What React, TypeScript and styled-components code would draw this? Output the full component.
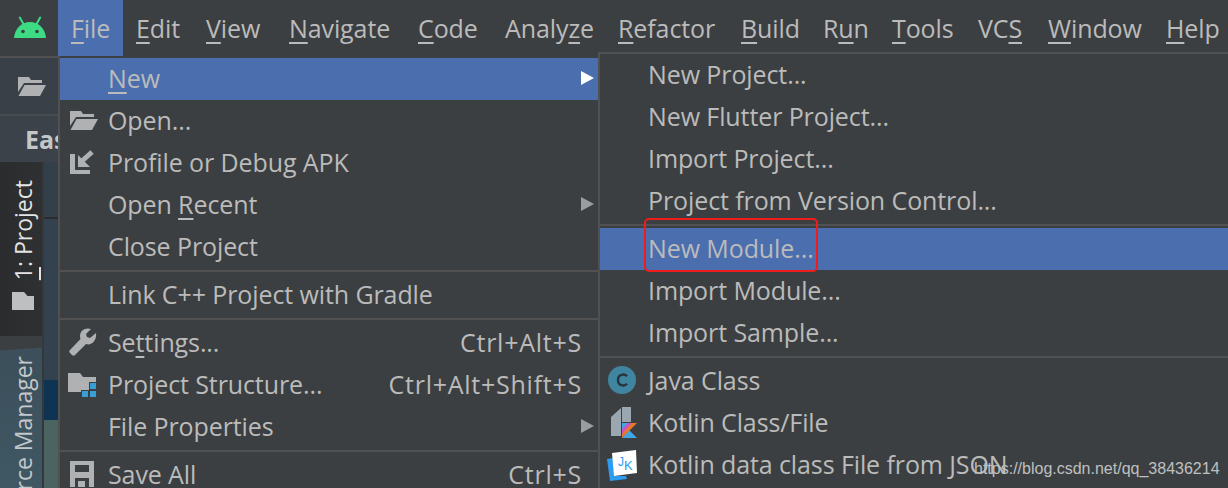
import React from 'react';
import styled, { createGlobalStyle } from 'styled-components';

const GlobalStyle = createGlobalStyle`
  html, body {
    margin: 0;
    padding: 0;
    overflow: hidden;
    background: #3c3f41;
  }
`;

const FONT = `"Open Sans", "Noto Sans", sans-serif`;

const M: React.FC<{ children: React.ReactNode }> = ({ children }) => <Mnemonic>{children}</Mnemonic>;

const AndroidLogo = () => (
  <svg width="34" height="24" viewBox="0 0 34 24">
    <path d="M10.5 9 L6.8 2.5 M23.5 9 L27.2 2.5" stroke="#3ddc84" strokeWidth="2" strokeLinecap="round" />
    <path d="M1 23 C1.8 13.5 8.5 7 17 7 C25.5 7 32.2 13.5 33 23 Z" fill="#3ddc84" />
    <circle cx="10" cy="16.5" r="1.8" fill="#3c3f41" />
    <circle cx="24" cy="16.5" r="1.8" fill="#3c3f41" />
  </svg>
);

const OpenFolder = () => (
  <svg width="28" height="21" viewBox="0 0 28 21">
    <path d="M0 1 H11 L13 4 H24 V7 H6 L0 16 Z" fill="#afb1b3" />
    <path d="M6.5 9 H28 L22 20 H0.5 Z" fill="#afb1b3" />
  </svg>
);

const DebugApk = () => (
  <svg width="28" height="28" viewBox="0 0 28 28">
    <path d="M0 6 H5 V22 H20 V26 H0 Z" fill="#afb1b3" />
    <path d="M8 7 V19 H20 Z" fill="#afb1b3" />
    <path d="M12 13 L22 4" stroke="#afb1b3" strokeWidth="5" />
  </svg>
);

const Wrench = () => (
  <svg width="28" height="28" viewBox="0 0 28 28">
    <path
      d="M27 5 L21 10 L18 9 L17 6 L22 1 C17 -1 11 2 11 8 C11 9 11 10 11.5 11 L1 22 C0 23 0 24 1 25 L3 27 C4 28 5 28 6 27 L17 16 C23 18 28 12 27 5 Z"
      fill="#afb1b3"
    />
  </svg>
);

const StructureIcon = () => (
  <svg width="28" height="25" viewBox="0 0 28 25">
    <path d="M0 1 H12 L15 5 H28 V10 H21 V18 H13 V20 H0 Z" fill="#afb1b3" />
    <rect x="22" y="11" width="6" height="6" fill="#389fd6" />
    <rect x="14" y="19" width="6" height="6" fill="#389fd6" />
    <rect x="22" y="19" width="6" height="6" fill="#389fd6" />
  </svg>
);

const SaveIcon = () => (
  <svg width="24" height="26" viewBox="0 0 24 26">
    <path fillRule="evenodd" d="M0 0 H24 V26 H0 Z M5 4 V11 H19 V4 Z M5 17 V26 H19 V17 Z" fill="#afb1b3" />
    <rect x="8" y="20" width="7" height="6" fill="#afb1b3" />
  </svg>
);

const JavaClassIcon = () => (
  <svg width="28" height="28" viewBox="0 0 28 28">
    <circle cx="14" cy="14" r="14" fill="#40859f" />
    <path d="M19 10.2 C17.8 8.8 16.2 8.4 14.5 8.6 C11.5 9 10 11.2 10 14 C10 16.8 11.5 19 14.5 19.4 C16.2 19.6 17.8 19.2 19 17.8" fill="none" stroke="#26353d" strokeWidth="2.4" />
  </svg>
);

const KotlinFileIcon = () => (
  <svg width="26" height="31" viewBox="0 0 26 31">
    <path d="M0 10 L10 1 V29 H0 Z" fill="#9aa7b0" />
    <path d="M11 0 H20 V15 H11 Z" fill="#9aa7b0" />
    <path d="M11 31 H26 L18 23 Z" fill="#40a6e8" />
    <path d="M11 16 V31 L26 16 Z" fill="#e8792b" />
    <path d="M11 16 H18 L11 23 Z" fill="#40a6e8" />
    <path d="M11 22 L17 16 H21 L11 27 Z" fill="#c757bc" />
  </svg>
);

const JsonKotlinIcon = () => (
  <svg width="33" height="33" viewBox="0 0 33 33">
    <path d="M1 11 L7 10 L10 28 H20 L21 31 L4 33 Z" fill="#2d9bf0" />
    <path d="M6 5 L30 2 L31 25 L8 28 Z" fill="#ffffff" />
    <text x="12" y="18" fontFamily="Liberation Sans, sans-serif" fontSize="12" fill="#2d9bf0">J</text>
    <text x="18" y="22" fontFamily="Liberation Sans, sans-serif" fontSize="13" fill="#2d9bf0">K</text>
  </svg>
);

export default function App() {
  return (
    <>
      <GlobalStyle />
      <Page>
        <MenuBar>
          <LogoSlot>
            <AndroidLogo />
          </LogoSlot>
          <TopItem $active $w={65}><M>F</M>ile</TopItem>
          <TopItem $w={70}><M>E</M>dit</TopItem>
          <TopItem $w={83}><M>V</M>iew</TopItem>
          <TopItem $w={129}><M>N</M>avigate</TopItem>
          <TopItem $w={87}><M>C</M>ode</TopItem>
          <TopItem $w={113}>Analy<M>z</M>e</TopItem>
          <TopItem $w={123}><M>R</M>efactor</TopItem>
          <TopItem $w={82}><M>B</M>uild</TopItem>
          <TopItem $w={69}>R<M>u</M>n</TopItem>
          <TopItem $w={86}><M>T</M>ools</TopItem>
          <TopItem $w={70}>VC<M>S</M></TopItem>
          <TopItem $w={118}><M>W</M>indow</TopItem>
          <TopItem $w={75}><M>H</M>elp</TopItem>
        </MenuBar>

        <Workspace>
          <Toolbar>
            <OpenFolder />
          </Toolbar>
          <TabRow>Eas</TabRow>
          <Body>
            <SideStrip>
              <ProjectTab>
                <SideFolder />
                <SideLabel $bright><M>1</M>: Project</SideLabel>
              </ProjectTab>
              <ResourceTab>
                <SideLabel>Resource Manager</SideLabel>
              </ResourceTab>
            </SideStrip>
            <Editor>
              <EditorDark />
              <EditorLine />
              <EditorBlue />
              <EditorNavy />
              <EditorGreen />
            </Editor>
          </Body>
        </Workspace>

        <FileMenu>
          <Row $selected>
            <IconSlot />
            <Label><M>N</M>ew</Label>
            <Arrow $bright />
          </Row>
          <Row>
            <IconSlot><OpenFolder /></IconSlot>
            <Label>Open...</Label>
          </Row>
          <Row>
            <IconSlot><DebugApk /></IconSlot>
            <Label>Profile or Debug APK</Label>
          </Row>
          <Row>
            <IconSlot />
            <Label>Open <M>R</M>ecent</Label>
            <Arrow />
          </Row>
          <Row>
            <IconSlot />
            <Label>Close Project</Label>
          </Row>
          <Separator />
          <Row>
            <IconSlot />
            <Label>Link C++ Project with Gradle</Label>
          </Row>
          <Separator />
          <Row>
            <IconSlot $shift={2}><Wrench /></IconSlot>
            <Label>Se<M>t</M>tings...</Label>
            <Shortcut>Ctrl+Alt+S</Shortcut>
          </Row>
          <Row>
            <IconSlot $shift={4}><StructureIcon /></IconSlot>
            <Label>Project Structure...</Label>
            <Shortcut>Ctrl+Alt+Shift+S</Shortcut>
          </Row>
          <Row>
            <IconSlot />
            <Label>File Properties</Label>
            <Arrow />
          </Row>
          <Separator />
          <Row>
            <IconSlot $shift={4}><SaveIcon /></IconSlot>
            <Label><M>S</M>ave All</Label>
            <Shortcut>Ctrl+S</Shortcut>
          </Row>
        </FileMenu>

        <SubMenu>
          <Row><IconSlot /><Label>New Project...</Label></Row>
          <Row><IconSlot /><Label>New Flutter Project...</Label></Row>
          <Row><IconSlot /><Label>Import Project...</Label></Row>
          <Row><IconSlot /><Label>Project from Version Control...</Label></Row>
          <Separator />
          <Row $selected><IconSlot /><Label>New Module...</Label></Row>
          <Row><IconSlot /><Label>Import Module...</Label></Row>
          <Row><IconSlot /><Label>Import Sample...</Label></Row>
          <Separator />
          <Row><IconSlot $shift={4}><JavaClassIcon /></IconSlot><Label>Java Class</Label></Row>
          <Row><IconSlot><KotlinFileIcon /></IconSlot><Label>Kotlin Class/File</Label></Row>
          <Row><IconSlot $shift={4}><JsonKotlinIcon /></IconSlot><Label>Kotlin data class File from JSON</Label></Row>
        </SubMenu>

        <RedMark />
        <Watermark>https://blog.csdn.net/qq_38436214</Watermark>
      </Page>
    </>
  );
}

const Page = styled.div`
  position: relative;
  width: 1228px;
  height: 488px;
  overflow: hidden;
  background: #3c3f41;
  color: #bbbbbb;
  font-family: ${FONT};
  font-size: 25px;
`;

const Mnemonic = styled.span`
  text-decoration: underline;
  text-decoration-thickness: 2px;
  text-underline-offset: 4px;
`;

const MenuBar = styled.div`
  display: flex;
  height: 56px;
  align-items: stretch;
  border-bottom: 2px solid #515151;
`;

const LogoSlot = styled.div`
  width: 58px;
  display: flex;
  align-items: center;
  justify-content: center;
  padding: 0 0 2px 2px;
  box-sizing: border-box;
`;

const TopItem = styled.div<{ $active?: boolean; $w: number }>`
  width: ${({ $w }) => $w}px;
  flex-shrink: 0;
  box-sizing: border-box;
  padding-left: 13px;
  display: flex;
  align-items: center;
  white-space: pre;
  letter-spacing: -0.1px;
  background: ${({ $active }) => ($active ? '#4b6eaf' : 'transparent')};
`;

const Workspace = styled.div`
  display: flex;
  flex-direction: column;
  height: 430px;
  overflow: hidden;
`;

const Toolbar = styled.div`
  flex-shrink: 0;
  height: 56px;
  display: flex;
  align-items: center;
  padding-left: 18px;
  background: #3a4047;
  border-bottom: 2px solid #4a4d4f;
`;

const TabRow = styled.div`
  flex-shrink: 0;
  height: 46px;
  padding-left: 25px;
  line-height: 46px;
  font-weight: 700;
  background: #3b4249;
  color: #c4c6c8;
`;

const Body = styled.div`
  flex: 1;
  min-height: 0;
  display: flex;
`;

const SideStrip = styled.div`
  width: 44px;
  display: flex;
  flex-direction: column;
  background: #35383a;
  box-sizing: border-box;
`;

const ProjectTab = styled.div`
  flex-shrink: 0;
  height: 174px;
  width: 42px;
  display: flex;
  flex-direction: column-reverse;
  align-items: center;
  gap: 12px;
  padding: 0 0 26px 4px;
  box-sizing: border-box;
  background: linear-gradient(90deg, #2a2c2d, #2e3031);
`;

const ResourceTab = styled.div`
  flex: 1;
  width: 42px;
  padding: 20px 0 0 4px;
  box-sizing: border-box;
  background: linear-gradient(176deg, #3c3f41 0 14px, #3c4f5b 15px, #3f5863);
  display: flex;
  flex-direction: column;
  align-items: center;
  justify-content: flex-start;
  overflow: hidden;
`;

const SideFolder = styled.div`
  width: 22px;
  height: 18px;
  background: #bdbfc1;
  clip-path: polygon(0 0, 55% 0, 70% 22%, 100% 22%, 100% 100%, 0 100%);
  flex-shrink: 0;
`;

const SideLabel = styled.div<{ $bright?: boolean }>`
  writing-mode: vertical-rl;
  transform: rotate(180deg);
  white-space: pre;
  flex-shrink: 0;
  font-size: 23px;
  line-height: 38px;
  color: ${({ $bright }) => ($bright ? '#e4e4e4' : '#c2c8cc')};
`;

const Editor = styled.div`
  width: 14px;
  display: flex;
  flex-direction: column;
`;

const EditorDark = styled.div`
  height: 55px;
  background: #344049;
`;

const EditorLine = styled.div`
  height: 2px;
  background: #2a2c2d;
`;

const EditorBlue = styled.div`
  height: 161px;
  background: #33424e;
`;

const EditorNavy = styled.div`
  height: 40px;
  background: #0f3453;
`;

const EditorGreen = styled.div`
  flex: 1;
  background: #4b6461;
`;

const FileMenu = styled.div`
  position: absolute;
  left: 58px;
  top: 56px;
  width: 542px;
  height: 440px;
  box-sizing: border-box;
  padding: 2px 0 0;
  background: #3c3f41;
  border-left: 2px solid #515151;
`;

const SubMenu = styled.div`
  position: absolute;
  left: 598px;
  top: 52px;
  width: 632px;
  height: 440px;
  box-sizing: border-box;
  background: #3c3f41;
  border: 2px solid #515151;
  border-bottom: 0;
`;

const Row = styled.div<{ $selected?: boolean }>`
  height: 42px;
  padding-bottom: 2px;
  box-sizing: border-box;
  display: flex;
  align-items: center;
  background: ${({ $selected }) => ($selected ? '#4b6eaf' : 'transparent')};
`;

const IconSlot = styled.div<{ $shift?: number }>`
  width: 48px;
  flex-shrink: 0;
  box-sizing: border-box;
  display: flex;
  align-items: center;
  justify-content: center;
  padding-right: ${({ $shift }) => $shift ?? 0}px;
`;

const Label = styled.span`
  white-space: pre;
  letter-spacing: -0.1px;
`;

const Shortcut = styled.span`
  margin-left: auto;
  margin-right: 18px;
  letter-spacing: 0.75px;
`;

const Arrow = styled.div<{ $bright?: boolean }>`
  margin-left: auto;
  margin-right: 6px;
  width: 0;
  height: 0;
  border-top: 7px solid transparent;
  border-bottom: 7px solid transparent;
  border-left: 13px solid ${({ $bright }) => ($bright ? '#ffffff' : '#9a9c9e')};
`;

const Separator = styled.div`
  height: 2px;
  margin: 2px 0;
  background: #515151;
`;

const RedMark = styled.div`
  position: absolute;
  left: 644px;
  top: 218px;
  width: 170px;
  height: 50px;
  border: 2px solid #f01c1c;
  border-radius: 5px;
`;

const Watermark = styled.div`
  position: absolute;
  left: 974px;
  top: 460px;
  font-family: "Liberation Sans", Arial, sans-serif;
  font-size: 16px;
  color: #bfc0c0;
  white-space: pre;
`;
